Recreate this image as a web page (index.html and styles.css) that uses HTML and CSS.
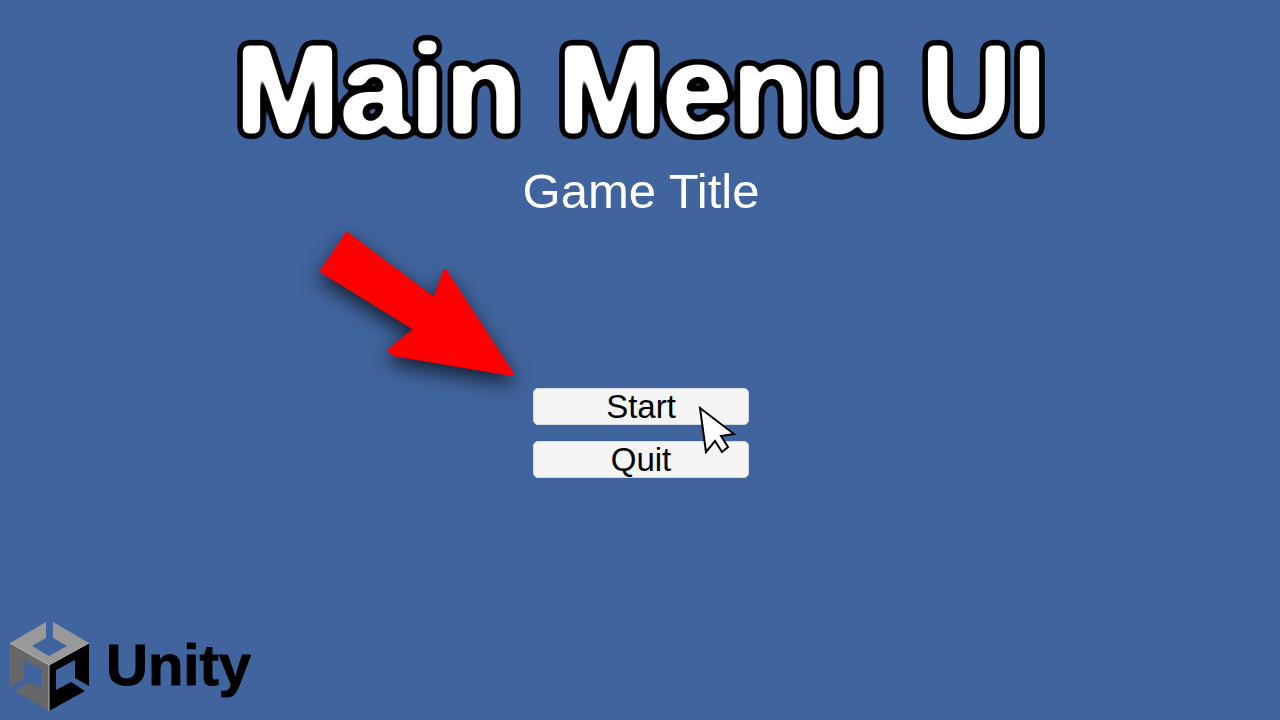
FILE: index.html
```
<!DOCTYPE html>
<html lang="en">
<head>
  <meta charset="utf-8">
  <meta name="viewport" content="width=device-width, initial-scale=1">
  <title>Main Menu UI</title>
  <link rel="stylesheet" href="styles.css">
</head>
<body>
  <svg class="filters" width="0" height="0" aria-hidden="true">
    <filter id="rounded-outline" x="-5%" y="-10%" width="110%" height="120%" color-interpolation-filters="sRGB">
      <feGaussianBlur in="SourceGraphic" stdDeviation="3" result="soft"/>
      <feComponentTransfer in="soft" result="mask">
        <feFuncA type="linear" slope="8" intercept="-3"/>
      </feComponentTransfer>
      <feFlood flood-color="#fff"/>
      <feComposite in2="mask" operator="in" result="face"/>
      <feMorphology in="mask" operator="dilate" radius="1" result="grown"/>
      <feGaussianBlur in="grown" stdDeviation="3" result="wide"/>
      <feComponentTransfer in="wide" result="edge">
        <feFuncA type="linear" slope="20" intercept="-1"/>
      </feComponentTransfer>
      <feFlood flood-color="#000"/>
      <feComposite in2="edge" operator="in" result="outline"/>
      <feMerge>
        <feMergeNode in="outline"/>
        <feMergeNode in="face"/>
      </feMerge>
    </filter>
  </svg>

  <main class="screen">
    <header class="heading">
      <h1 class="headline">Main Menu UI</h1>
      <p class="game-title">Game Title</p>
    </header>

    <nav class="menu" aria-label="Main menu">
      <button class="menu-button" type="button">Start</button>
      <button class="menu-button" type="button">Quit</button>
      <svg class="arrow" viewBox="0 0 230 180" aria-hidden="true">
        <path d="M47 14L22 51L116 109L90 130L93 134L212 154L145 51L135 80Z" fill="#f00" stroke="#f00" stroke-width="4" stroke-linejoin="round"/>
      </svg>
      <svg class="cursor" viewBox="0 0 60 70" aria-hidden="true">
        <path d="M10 13L44 39L31 41L38 52L32 57L25 46L16 57Z" fill="#fff" stroke="#000" stroke-width="2"/>
      </svg>
    </nav>

    <footer class="brand">
      <svg class="brand-mark" viewBox="0 0 80 90" aria-hidden="true">
        <path d="M36 0V16L22 24L39 34L57 24L43 16V0L79 21L39 43L0 21Z" fill="#999"/>
        <path d="M0 21L39 43V89L5 69L19 60L32 67V48L14 38V57L0 65Z" fill="#676767"/>
        <path d="M79 21L39 43V89L75 69L61 60L46 68V48L65 38V56L79 64Z" fill="#000"/>
        <path d="M0 21L39 43L79 21M39 43V89" fill="none" stroke="#b8b8b8" stroke-width="1"/>
      </svg>
      <span class="brand-name">Unity</span>
    </footer>
  </main>
</body>
</html>
```

FILE: styles.css
```
* {
  box-sizing: border-box;
}

body {
  margin: 0;
  background: #40649d;
  font-family: "Liberation Sans", Arial, sans-serif;
}

.filters {
  position: absolute;
}

.screen {
  display: flex;
  flex-direction: column;
  align-items: center;
  min-height: 100vh;
  padding: 16px 8px 8px 10px;
}

.heading {
  text-align: center;
}

.headline {
  margin: 0;
  color: #fff;
  font-size: 126px;
  font-weight: 700;
  line-height: 148px;
  filter: url(#rounded-outline);
}

.game-title {
  margin: 0;
  color: #fff;
  font-size: 49px;
  line-height: 54px;
}

.menu {
  position: relative;
  display: flex;
  flex-direction: column;
  gap: 16px;
  width: 216px;
  margin-top: 170px;
}

.menu-button {
  height: 37px;
  padding: 0;
  border: 1px solid #d5d9e0;
  border-radius: 5px;
  background: #f4f4f4;
  color: #000;
  font-family: inherit;
  font-size: 33px;
  line-height: 35px;
}

.arrow {
  position: absolute;
  top: -168px;
  left: -233px;
  width: 230px;
  height: 180px;
  overflow: visible;
  pointer-events: none;
  filter: drop-shadow(0 8px 10px rgba(0, 0, 0, 0.7));
}

.cursor {
  position: absolute;
  top: 7px;
  left: 157px;
  width: 60px;
  height: 70px;
  pointer-events: none;
}

.brand {
  display: flex;
  align-items: center;
  align-self: flex-start;
  gap: 16px;
  margin-top: auto;
}

.brand-mark {
  width: 80px;
  height: 90px;
}

.brand-name {
  padding-bottom: 4px;
  color: #000;
  font-size: 58px;
  font-weight: 700;
  line-height: 86px;
  -webkit-text-stroke: 1px #000;
}
```
